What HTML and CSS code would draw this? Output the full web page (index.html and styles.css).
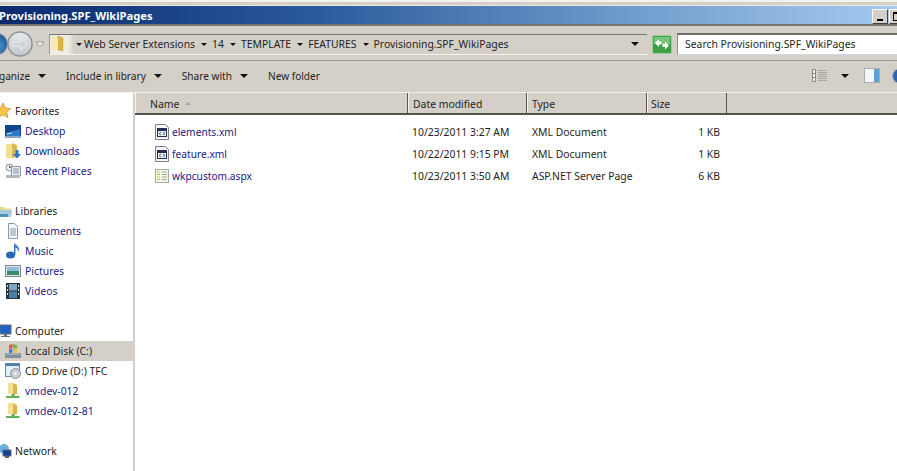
FILE: index.html
```html
<!DOCTYPE html>
<html lang="en">
<head>
<meta charset="utf-8">
<title>Provisioning.SPF_WikiPages</title>
<link rel="stylesheet" href="styles.css">
</head>
<body>
<div class="window">
  <div class="topstrip"></div>
  <div class="titlebar">
    <span class="title">Provisioning.SPF_WikiPages</span>
    <span class="winbtns">
      <span class="winbtn"><span class="min"></span></span>
      <span class="winbtn"><span class="max"></span></span>
    </span>
  </div>
  <div class="navrow">
    <svg class="navbtns" width="49" height="34" viewBox="0 0 49 34">
      <defs>
        <radialGradient id="backg" cx=".5" cy=".6" r=".7"><stop offset="0" stop-color="#4f9bd8"/><stop offset="1" stop-color="#0f4a86"/></radialGradient>
        <linearGradient id="fwdg" x1="0" y1="0" x2="0" y2="1"><stop offset="0" stop-color="#e6e8ea"/><stop offset="1" stop-color="#c2c7cb"/></linearGradient>
      </defs>
      <circle cx="-3" cy="17" r="10.500" fill="url(#backg)" stroke="#8b959c"/>
      <circle cx="20" cy="17" r="12" fill="url(#fwdg)" stroke="#8e9499" stroke-width="1.500"/>
      <path d="M13 15h8v-4l6 6-6 6v-4h-8z" fill="#ccd1d5" stroke="#eef0f1" stroke-width="1"/>
      <path d="M36 15h8l-4 4.500z" fill="#f4f4f2" stroke="#8c8c88" stroke-width=".8"/>
    </svg>
    <div class="address">
      <svg class="addr-folder" width="15" height="18" viewBox="0 0 15 18">
        <path d="M1 2h10v13H1z" fill="#f3e1a0"/>
        <path d="M7 1l5 2v13l-5-1z" fill="#dcb54a" stroke="#c99f38" stroke-width=".5"/>
        <path d="M1 3h6v12H1z" fill="#f6e8b0"/>
      </svg>
      <div class="crumbs">
        <span class="arrow"></span><span>Web Server Extensions</span>
        <span class="arrow"></span><span>14</span>
        <span class="arrow"></span><span>TEMPLATE</span>
        <span class="arrow"></span><span>FEATURES</span>
        <span class="arrow"></span><span>Provisioning.SPF_WikiPages</span>
      </div>
      <span class="arrow addr-drop"></span>
    </div>
    <svg class="refresh" width="20" height="19" viewBox="0 0 20 19">
      <rect x=".5" y=".5" width="19" height="18" rx="1.500" fill="#3f9f45" stroke="#9dcf9f"/>
      <rect x="2" y="2" width="16" height="7" fill="#76c47a"/>
      <path d="M3 8l4-4v2.500h2.500v3H7V12zM17 10.500l-4 4V12h-2.500V9H13V6.500z" fill="#fff"/>
    </svg>
    <div class="search">Search Provisioning.SPF_WikiPages</div>
  </div>
  <div class="cmdbar">
    <span class="cmd cmd-first">Organize<span class="arrow"></span></span>
    <span class="cmd">Include in library<span class="arrow"></span></span>
    <span class="cmd">Share with<span class="arrow"></span></span>
    <span class="cmd">New folder</span>
    <span class="cmd-tools">
      <svg width="16" height="14" viewBox="0 0 16 14">
        <path d="M.500.500h3v4h-3zM.500 4.500h3v4h-3zM.500 8.500h3v4h-3z" fill="#f2f2ee" stroke="#85857f"/>
        <path d="M6 1.500h9M6 3.500h9M6 5.500h9M6 7.500h9M6 9.500h9M6 11.500h9" stroke="#a8a8a3"/>
      </svg>
      <span class="arrow tool-arrow"></span>
      <svg class="tool-pane" width="16" height="15" viewBox="0 0 16 15">
        <rect x=".5" y=".5" width="15" height="14" fill="#f5f7f8" stroke="#a5adb3"/>
        <rect x="10" y="1" width="5" height="13" fill="#5aa3d3"/>
      </svg>
      <svg class="tool-help" width="16" height="18" viewBox="0 0 16 18">
        <circle cx="8" cy="9" r="7.500" fill="#2b63b5" stroke="#9fb4cf"/>
      </svg>
    </span>
  </div>
  <div class="main">
    <nav class="sidebar">
      <div class="nav-item top">
        <svg class="ico-top" width="16" height="16" viewBox="0 0 16 16"><path d="M5 0l2.400 5 5.300.6-4 3.500 1.300 5.500L5 11.800.1 14.600 1.300 9.100l-4-3.500L2.600 5z" fill="#f6c545" stroke="#c9872a" stroke-width=".7"/></svg>
        Favorites
      </div>
      <div class="nav-item child link">
        <svg class="ico" width="16" height="16" viewBox="0 0 16 16"><rect y="2" width="16" height="12" fill="#12458f"/><path d="M1 10l14-4v7H1z" fill="#2d79c9"/><path d="M2 11l5-1" stroke="#cfe0f0"/><rect y="13" width="16" height="2" fill="#8fa4c4"/></svg>
        Desktop
      </div>
      <div class="nav-item child link">
        <svg class="ico" width="16" height="16" viewBox="0 0 16 16"><path d="M1 1h8v14H1z" fill="#f3dd90"/><path d="M7 0l5 2v12l-5 1z" fill="#dfb650"/><path d="M10.500 7h3v4h2.500l-4 4.500-4-4.500h2.500z" fill="#2a74c4"/></svg>
        Downloads
      </div>
      <div class="nav-item child link">
        <svg class="ico" width="16" height="16" viewBox="0 0 16 16"><circle cx="4.500" cy="4.500" r="3.500" fill="#eef0f0" stroke="#8b9196"/><path d="M4.500 2.500v2h2" fill="none" stroke="#555"/><rect x="6.500" y="3.500" width="9" height="9" fill="#e8eef2" stroke="#8b9ba6"/><path d="M8 6h6M8 8h6M8 10h6" stroke="#7d97aa"/><rect x="1" y="12" width="14" height="3" fill="#b3b6b8"/></svg>
        Recent Places
      </div>
      <div class="nav-gap"></div>
      <div class="nav-item top">
        <svg class="ico-top" width="16" height="16" viewBox="0 0 16 16"><path d="M2 4h4l1.500 1.500H13V12H2z" fill="#e9d88e"/><path d="M2 7h12l-1 7H2z" fill="#a5cde0"/><rect x="2" y="11" width="8" height="3" fill="#4f93b6"/></svg>
        Libraries
      </div>
      <div class="nav-item child link">
        <svg class="ico" width="16" height="16" viewBox="0 0 16 16"><path d="M3.500.5h6l3 3v12h-9z" fill="#f7f8f8" stroke="#8e979d"/><path d="M5 6h6M5 8h6M5 10h6M5 12h6" stroke="#8397a6"/></svg>
        Documents
      </div>
      <div class="nav-item child link">
        <svg class="ico" width="16" height="16" viewBox="0 0 16 16"><ellipse cx="5.500" cy="12" rx="4.500" ry="3.500" fill="#2a66b8"/><path d="M9 12V0c2 2 5 3 5 7l-1 2c0-3-1.500-4-2.500-4.500V12z" fill="#3b7cc9"/></svg>
        Music
      </div>
      <div class="nav-item child link">
        <svg class="ico" width="16" height="16" viewBox="0 0 16 16"><rect x=".5" y="2.500" width="15" height="11" fill="#dfe4e6" stroke="#7e8890"/><rect x="2" y="4" width="12" height="4" fill="#8fbfd3"/><rect x="2" y="8" width="12" height="4" fill="#3f8a6a"/></svg>
        Pictures
      </div>
      <div class="nav-item child link">
        <svg class="ico" width="16" height="16" viewBox="0 0 16 16"><rect x="1" y="0" width="14" height="16" fill="#2e3338"/><rect x="4" y="1" width="8" height="6.500" fill="#7aa7c7"/><rect x="4" y="8.500" width="8" height="6.500" fill="#4a7fa8"/><path d="M2 2h1v2H2zM2 6h1v2H2zM2 10h1v2H2zM13 2h1v2h-1zM13 6h1v2h-1zM13 10h1v2h-1z" fill="#d8dde0"/></svg>
        Videos
      </div>
      <div class="nav-gap"></div>
      <div class="nav-item top">
        <svg class="ico-top" width="16" height="16" viewBox="0 0 16 16"><rect x="2" y="2" width="11" height="9" fill="#1f63c0" stroke="#63707b"/><path d="M3 13h9v1H3zM6 11h3v2H6z" fill="#656f78"/></svg>
        Computer
      </div>
      <div class="nav-item child selected">
        <svg class="ico" width="16" height="16" viewBox="0 0 16 16"><rect x="0" y="10" width="16" height="5" fill="#7d909e"/><path d="M1 11h14" stroke="#b9c5ce"/><path d="M4 2l3.500-1v4L4 6z" fill="#e2573a"/><path d="M8 1l4 1v4L8 5z" fill="#76b846"/><path d="M4 6.500L7.500 5.500v4L4 10.500z" fill="#3d83d0"/><path d="M8 5.500l4 1v4l-4-1z" fill="#f0c23c"/></svg>
        Local Disk (C:)
      </div>
      <div class="nav-item child">
        <svg class="ico" width="16" height="16" viewBox="0 0 16 16"><rect x=".5" y=".5" width="14" height="13" fill="#e6eef5" stroke="#6f88a0"/><rect x="1" y="1" width="13" height="2" fill="#4a7db0"/><circle cx="10.500" cy="10.500" r="5" fill="#c9ced2" stroke="#8b9298"/><circle cx="10.500" cy="10.500" r="1.300" fill="#fff"/></svg>
        CD Drive (D:) TFC
      </div>
      <div class="nav-item child link">
        <svg class="ico" width="16" height="16" viewBox="0 0 16 16"><path d="M3 0h6v11H3z" fill="#f4e095"/><path d="M8 0l4 2v9l-4 1z" fill="#dcb44e"/><path d="M6.500 11h3v2h5v2H1v-2h5.500z" fill="#62b258"/></svg>
        vmdev-012
      </div>
      <div class="nav-item child link">
        <svg class="ico" width="16" height="16" viewBox="0 0 16 16"><path d="M3 0h6v11H3z" fill="#f4e095"/><path d="M8 0l4 2v9l-4 1z" fill="#dcb44e"/><path d="M6.500 11h3v2h5v2H1v-2h5.500z" fill="#62b258"/></svg>
        vmdev-012-81
      </div>
      <div class="nav-gap"></div>
      <div class="nav-item top">
        <svg class="ico-top" width="16" height="16" viewBox="0 0 16 16"><circle cx="6" cy="6" r="5" fill="#6db0dc"/><rect x="5" y="7" width="8" height="6" fill="#123f98" stroke="#5c6a76"/><rect x="7" y="13" width="4" height="2" fill="#59646d"/></svg>
        Network
      </div>
    </nav>
    <section class="content">
      <div class="headers">
        <div class="col col-name head">Name<span class="sort"></span></div>
        <div class="col col-date head">Date modified</div>
        <div class="col col-type head">Type</div>
        <div class="col col-size head">Size</div>
        <div class="col-rest"></div>
      </div>
      <div class="files">
        <div class="file">
          <div class="col col-name">
            <svg class="fico" width="16" height="16" viewBox="0 0 16 16"><path d="M1.500.5h10l3 3v12h-13z" fill="#f6f7f8" stroke="#77808a"/><rect x="3" y="4" width="10" height="9" fill="#262c52"/><rect x="4" y="7" width="8" height="5" fill="#e8edf2"/><path d="M7 8l-2 1.500L7 11M9 8l2 1.500L9 11" fill="none" stroke="#3a4a6a" stroke-width=".8"/></svg>
            <span class="fname">elements.xml</span>
          </div>
          <div class="col col-date">10/23/2011 3:27 AM</div>
          <div class="col col-type">XML Document</div>
          <div class="col col-size">1 KB</div>
        </div>
        <div class="file">
          <div class="col col-name">
            <svg class="fico" width="16" height="16" viewBox="0 0 16 16"><path d="M1.500.5h10l3 3v12h-13z" fill="#f6f7f8" stroke="#77808a"/><rect x="3" y="4" width="10" height="9" fill="#262c52"/><rect x="4" y="7" width="8" height="5" fill="#e8edf2"/><path d="M7 8l-2 1.500L7 11M9 8l2 1.500L9 11" fill="none" stroke="#3a4a6a" stroke-width=".8"/></svg>
            <span class="fname">feature.xml</span>
          </div>
          <div class="col col-date">10/22/2011 9:15 PM</div>
          <div class="col col-type">XML Document</div>
          <div class="col col-size">1 KB</div>
        </div>
        <div class="file">
          <div class="col col-name">
            <svg class="fico" width="16" height="16" viewBox="0 0 16 16"><rect x="1.500" y="1.500" width="13" height="13" fill="#f5f6e4" stroke="#a3aea4"/><path d="M3 4h3M3 6.500h3M3 9h3M3 11.500h3" stroke="#d9b45c"/><path d="M8 4h5M8 6.500h5M8 9h5M8 11.500h5" stroke="#9ab59a"/></svg>
            <span class="fname">wkpcustom.aspx</span>
          </div>
          <div class="col col-date">10/23/2011 3:50 AM</div>
          <div class="col col-type">ASP.NET Server Page</div>
          <div class="col col-size">6 KB</div>
        </div>
      </div>
    </section>
  </div>
</div>
</body>
</html>
```
FILE: styles.css
```css
* { box-sizing: border-box; }
html, body { margin: 0; padding: 0; height: 100%; overflow: hidden; }
body { font-family: "Noto Sans", "Open Sans", sans-serif; font-size: 10.400px; color: #1e1e1e; background: #d4d0c8; }
.window { width: 897px; height: 471px; display: flex; flex-direction: column; overflow: hidden; background: #d4d0c8; }
.topstrip { height: 6px; background: #d4d0c8; border-top: 2px solid #f4f2ec; border-bottom: 1px solid #eeeae2; flex: none; }
.titlebar { height: 20px; flex: none; display: flex; align-items: center; justify-content: space-between; background: linear-gradient(90deg, #0a2a6c 0%, #2a5a9c 35%, #6f9ccc 70%, #a6caf0 100%); border-bottom: 2px solid #77756f; }
.title { color: #fff; font-weight: 700; font-size: 11.200px; margin-left: -1px; white-space: nowrap; }
.winbtns { display: flex; gap: 1px; margin-right: -8px; margin-top: 2px; }
.winbtn { width: 16px; height: 15px; background: #d4d0c8; border: 1px solid #404040; border-top-color: #fff; border-left-color: #fff; display: flex; position: relative; }
.min { width: 6px; height: 2px; background: #000; margin: 9px 0 0 4px; }
.max { width: 9px; height: 9px; border: 1px solid #000; border-top-width: 2px; margin: 2px 0 0 3px; }
.navrow { height: 35px; flex: none; display: flex; align-items: center; padding-top: 2px; border-bottom: 1px solid #9d9a93; }
.navbtns { flex: none; }
.address { width: 598px; height: 21px; flex: none; display: flex; align-items: center; background: linear-gradient(90deg, #f0ecdf 0, #f0ecdf 18px, #d4d0c8 24px); border-left: 1px solid #9c9a93; border-top: 1px solid #77756f; border-bottom: 1px solid #f4f2ec; padding-left: 1px; }
.addr-folder { flex: none; }
.crumbs { display: flex; align-items: center; margin-left: 10px; flex: 1; white-space: nowrap; }
.crumbs .arrow { margin: 0 5px 0 6px; }
.crumbs .arrow:first-child { margin-left: 0; margin-right: 2px; }
.arrow { display: inline-block; width: 0; height: 0; border-left: 4px solid transparent; border-right: 4px solid transparent; border-top: 4px solid #111; flex: none; }
.crumbs .arrow { border-left-width: 3px; border-right-width: 3px; border-top-width: 3px; }
.addr-drop { margin-right: 8px; }
.refresh { flex: none; margin-left: 5px; }
.search { margin-left: 5px; width: 230px; height: 22px; flex: none; background: #fff; border-top: 2px solid #6f6d68; border-left: 1px solid #8f8d87; border-bottom: 1px solid #d8d8d8; padding-left: 7px; line-height: 19px; white-space: nowrap; overflow: hidden; }
.cmdbar { height: 31px; flex: none; display: flex; align-items: center; position: relative; white-space: nowrap; padding-bottom: 2px; font-size: 10.100px; }
.cmd { display: inline-flex; align-items: center; margin-right: 20px; }
.cmd .arrow { margin-left: 8px; }
.cmd-first { margin-left: -13px; }
.cmd-tools { margin-left: auto; display: flex; align-items: center; }
.tool-arrow { margin: 0 0 0 13px; }
.tool-pane { margin-left: 15px; }
.tool-help { margin-left: 12px; margin-right: -11px; }
.main { flex: 1; display: flex; min-height: 0; border-top: 1px solid #f2f0ea; }
.sidebar { width: 133px; flex: none; background: #fff; padding-top: 8px; overflow: hidden; margin-right: 2px; }
.nav-item { height: 20px; display: flex; align-items: center; white-space: nowrap; }
.nav-gap { height: 20px; }
.top { padding-left: 15px; position: relative; color: #222; }
.child { padding-left: 25px; position: relative; }
.link { color: #1a1a84; }
.selected { background: #d4d0c8; }
.ico-top { position: absolute; left: -2px; top: 2px; }
.ico { position: absolute; left: 5px; top: 2px; }
.content { flex: 1; background: #fff; min-width: 0; }
.headers { height: 22px; display: flex; background: #d4d0c8; border-bottom: 2px solid #55544f; }
.col { flex: none; white-space: nowrap; }
.col-name { width: 273px; display: flex; align-items: center; }
.col-date { width: 119px; padding-left: 4px; }
.col-type { width: 120px; padding-left: 5px; }
.col-size { width: 80px; padding-left: 3px; }
.head { border-right: 1px solid #55544f; border-left: 1px solid #f6f4ee; line-height: 22px; }
.head.col-type { padding-left: 4px; }
.col-name.head { padding-left: 14px; padding-top: 1px; }
.col-rest { flex: 1; }
.sort { width: 0; height: 0; border-left: 3px solid transparent; border-right: 3px solid transparent; border-bottom: 3px solid #a9a69f; margin-left: 6px; }
.files { padding-top: 6px; }
.file { height: 22px; display: flex; align-items: center; }
.file .col-name { padding-left: 19px; }
.file .col-size { text-align: right; padding-right: 7px; }
.fico { flex: none; }
.fname { color: #1a1a84; margin-left: 2px; font-size: 10.200px; }
```
